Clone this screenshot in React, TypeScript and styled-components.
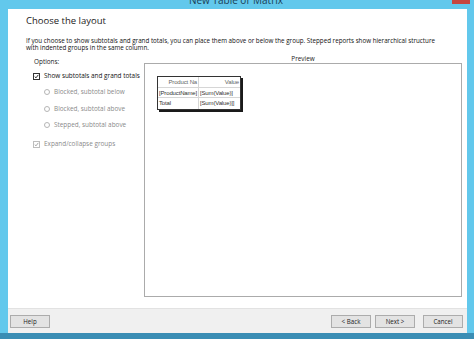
import { createGlobalStyle } from "styled-components";
import styled from "styled-components";

const GlobalStyle = createGlobalStyle`
    html, body {
        margin: 0;
        padding: 0;
        width: 474px;
        height: 339px;
        overflow: hidden;
        background: #5fc6ea;
    }
    * {
        box-sizing: border-box;
    }
`;

const Frame = styled.div`
    width: 474px;
    height: 339px;
    display: flex;
    flex-direction: column;
    background: #62c8ec;
    border-bottom: 6px solid #3a8db4;
    font-family: "Open Sans", "Noto Sans", sans-serif;
`;

const TitleBar = styled.div`
    height: 9px;
    flex: none;
    position: relative;
    overflow: hidden;
    display: flex;
    justify-content: center;
    align-items: flex-end;
`;

// the screenshot is cropped, so only the lower part of the caption shows
const TitleText = styled.span`
    font-size: 10px;
    line-height: 10px;
    margin-bottom: 4px;
    color: #1b3e55;
    margin-left: -2px;
`;

const CloseButton = styled.div`
    position: absolute;
    top: 0;
    right: 4px;
    width: 18px;
    height: 4px;
    background: #c7463f;
`;

const Client = styled.div`
    flex: 1;
    display: flex;
    flex-direction: column;
    margin: 0 7px 0 8px;
    background: #fff;
`;

const Body = styled.div`
    flex: 1;
    display: flex;
    flex-direction: column;
    padding: 6px 5px 11px 18px;
`;

const Heading = styled.div`
    font-size: 9.5px;
    color: #222;
    line-height: 12px;
`;

const Description = styled.p`
    margin: 10px 0 0 0;
    font-size: 6.25px;
    line-height: 7px;
    color: #111;
    width: 420px;
`;

const Columns = styled.div`
    flex: 1;
    display: flex;
    margin-top: 7px;
`;

const OptionsPane = styled.div`
    width: 118px;
    flex: none;
    display: flex;
    flex-direction: column;
    padding-left: 8px;
`;

const SmallLabel = styled.div`
    font-size: 6.4px;
    line-height: 8px;
    color: #222;
`;

const OptionRow = styled.div<{ $indent?: boolean; $gap: number }>`
    display: flex;
    align-items: center;
    gap: 4px;
    margin-top: ${(p) => p.$gap}px;
    margin-left: ${(p) => (p.$indent ? 10 : -1)}px;
    font-size: 6.4px;
    line-height: 8px;
`;

const OptionText = styled.span<{ $disabled?: boolean }>`
    color: ${(p) => (p.$disabled ? "#8a8a8a" : "#111")};
`;

const Check = styled.span<{ $disabled?: boolean }>`
    width: 7px;
    height: 7px;
    border: 1px solid ${(p) => (p.$disabled ? "#bdbdbd" : "#333")};
    background: #fff;
    display: flex;
    align-items: center;
    justify-content: center;
    flex: none;
`;

const Radio = styled.span`
    width: 6px;
    height: 6px;
    border-radius: 50%;
    border: 1px solid #b5b5b5;
    background: #fff;
    flex: none;
`;

const PreviewPane = styled.div`
    flex: 1;
    display: flex;
    flex-direction: column;
`;

const PreviewLabel = styled.div`
    text-align: center;
    font-size: 6.4px;
    line-height: 8px;
    color: #222;
    height: 8px;
    margin-top: -3px;
`;

const PreviewBox = styled.div`
    flex: 1;
    border: 1px solid #ababab;
    background: #fff;
    padding: 12px 0 0 12px;
`;

const Matrix = styled.div`
    display: grid;
    grid-template-columns: 41px 41px;
    width: 84px;
    border: 1px solid #333;
    box-shadow: 2px 2px 0 #1a1a1a;
    font-family: "Liberation Sans", Arial, sans-serif;
    font-size: 6px;
    letter-spacing: -0.15px;
    background: #fff;
`;

const Cell = styled.div<{ $right?: boolean; $header?: boolean; $lastCol?: boolean; $lastRow?: boolean }>`
    height: 10.5px;
    line-height: 10px;
    padding: 0 1px;
    white-space: nowrap;
    overflow: hidden;
    text-align: ${(p) => (p.$right ? "right" : "left")};
    color: ${(p) => (p.$header ? "#666" : "#333")};
    border-right: ${(p) => (p.$lastCol ? "none" : "1px solid #d6d6d6")};
    border-bottom: ${(p) => (p.$lastRow ? "none" : "1px solid #d6d6d6")};
`;

const Footer = styled.div`
    height: 25px;
    flex: none;
    background: #f0f0f0;
    border-top: 1px solid #e2e2e2;
    display: flex;
    align-items: flex-start;
    padding: 6px 4px 0 2px;
`;

const Button = styled.button<{ $gap?: number }>`
    width: 40px;
    height: 13px;
    margin-left: ${(p) => p.$gap ?? 0}px;
    padding: 0;
    border: 1px solid #acacac;
    background: #e3e3e3;
    font-family: "Open Sans", "Noto Sans", sans-serif;
    font-size: 6.2px;
    line-height: 11px;
    color: #222;
    text-align: center;
`;

const Spacer = styled.div`
    flex: 1;
`;

const Tick = ({ color }: { color: string }) => (
    <svg width="7" height="7" viewBox="0 0 7 7">
        <path d="M1 3.6 L2.8 5.4 L6 1.2" fill="none" stroke={color} strokeWidth="1.3" />
    </svg>
);

const rows = [
    ["Product Na", "Value"],
    ["[ProductName]", "[Sum(Value)]"],
    ["Total", "[Sum(Value)]]"],
];

export default function App() {
    return (
        <>
            <GlobalStyle />
            <Frame>
                <TitleBar>
                    <TitleText>New Table or Matrix</TitleText>
                    <CloseButton />
                </TitleBar>
                <Client>
                    <Body>
                        <Heading>Choose the layout</Heading>
                        <Description>
                            If you choose to show subtotals and grand totals, you can place them above or below the group. Stepped reports show hierarchical structure with indented groups in the same column.
                        </Description>
                        <Columns>
                            <OptionsPane>
                                <SmallLabel>Options:</SmallLabel>
                                <OptionRow $gap={6}>
                                    <Check><Tick color="#222" /></Check>
                                    <OptionText>Show subtotals and grand totals</OptionText>
                                </OptionRow>
                                <OptionRow $indent $gap={8}>
                                    <Radio />
                                    <OptionText $disabled>Blocked, subtotal below</OptionText>
                                </OptionRow>
                                <OptionRow $indent $gap={9}>
                                    <Radio />
                                    <OptionText $disabled>Blocked, subtotal above</OptionText>
                                </OptionRow>
                                <OptionRow $indent $gap={8}>
                                    <Radio />
                                    <OptionText $disabled>Stepped, subtotal above</OptionText>
                                </OptionRow>
                                <OptionRow $gap={11}>
                                    <Check $disabled><Tick color="#a0a0a0" /></Check>
                                    <OptionText $disabled>Expand/collapse groups</OptionText>
                                </OptionRow>
                            </OptionsPane>
                            <PreviewPane>
                                <PreviewLabel>Preview</PreviewLabel>
                                <PreviewBox>
                                    <Matrix>
                                        {rows.map((r, i) =>
                                            r.map((c, j) => (
                                                <Cell
                                                    key={`${i}-${j}`}
                                                    $right={i === 0}
                                                    $header={i === 0}
                                                    $lastCol={j === 1}
                                                    $lastRow={i === rows.length - 1}
                                                >
                                                    {c}
                                                </Cell>
                                            ))
                                        )}
                                    </Matrix>
                                </PreviewBox>
                            </PreviewPane>
                        </Columns>
                    </Body>
                    <Footer>
                        <Button>Help</Button>
                        <Spacer />
                        <Button>&lt; Back</Button>
                        <Button $gap={4}>Next &gt;</Button>
                        <Button $gap={8}>Cancel</Button>
                    </Footer>
                </Client>
            </Frame>
        </>
    );
}
